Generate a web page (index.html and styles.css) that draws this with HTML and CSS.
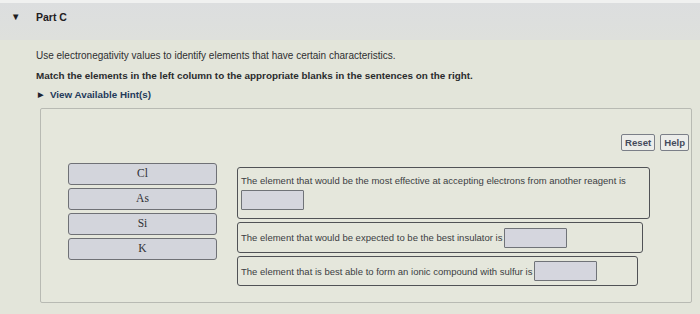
FILE: index.html
```html
<!DOCTYPE html>
<html>
<head>
<meta charset="utf-8">
<link rel="stylesheet" href="styles.css">
</head>
<body>
<div class="header">
  <span class="caret">&#9660;</span>
  <span class="part">Part C</span>
</div>
<div class="content">
  <p class="intro">Use electronegativity values to identify elements that have certain characteristics.</p>
  <p class="instr">Match the elements in the left column to the appropriate blanks in the sentences on the right.</p>
  <div class="hint"><span class="hint-caret">&#9654;</span><span class="hint-text">View Available Hint(s)</span></div>
  <div class="panel">
    <div class="toolbar">
      <span class="btn">Reset</span>
      <span class="btn">Help</span>
    </div>
    <div class="work">
      <div class="tiles">
        <div class="tile">Cl</div>
        <div class="tile">As</div>
        <div class="tile">Si</div>
        <div class="tile">K</div>
      </div>
      <div class="sentences">
        <div class="sent sent1">
          <span>The element that would be the most effective at accepting electrons from another reagent is</span>
          <span class="blank blank1"></span>
        </div>
        <div class="sent sent2">
          <span>The element that would be expected to be the best insulator is</span>
          <span class="blank"></span>
        </div>
        <div class="sent sent3">
          <span>The element that is best able to form an ionic compound with sulfur is</span>
          <span class="blank"></span>
        </div>
      </div>
    </div>
  </div>
</div>
</body>
</html>
```
FILE: styles.css
```css
html, body {
  margin: 0;
  padding: 0;
}
body {
  width: 700px;
  height: 314px;
  overflow: hidden;
  background: #e3e5da;
  font-family: "Liberation Sans", Arial, sans-serif;
  color: #2a2b2c;
}
.header {
  background: linear-gradient(#dcdedf, #dee0dc);
  border-top: 3px solid #f0f1f0;
  display: flex;
  align-items: center;
  padding-left: 11px;
  box-sizing: border-box;
  height: 40px;
  padding-bottom: 10px;
}
.caret {
  font-size: 9.5px;
  width: 25px;
  color: #1c1d1f;
}
.part {
  font-size: 10.5px;
  font-weight: bold;
  color: #1f2022;
}
.content {
  padding-left: 36px;
}
.intro {
  margin: 10px 0 0 0;
  font-size: 10px;
  line-height: 12px;
  color: #2e2f31;
}
.instr {
  margin: 8px 0 0 0;
  font-size: 9.9px;
  font-weight: bold;
  line-height: 12px;
  color: #2a2b2d;
}
.hint {
  margin-top: 7px;
  display: flex;
  align-items: center;
  padding-left: 2px;
  color: #243a5a;
  font-size: 9.8px;
  font-weight: bold;
}
.hint-caret {
  font-size: 7px;
  width: 12px;
  color: #1d2330;
}
.panel {
  margin-top: 8px;
  margin-left: 4px;
  width: 652px;
  height: 195px;
  border: 1px solid #b8bab3;
  border-radius: 2px;
  background: #e5e7dc;
  box-sizing: border-box;
}
.toolbar {
  display: flex;
  justify-content: flex-end;
  gap: 5px;
  padding: 25px 2px 0 0;
}
.btn {
  font-size: 9.6px;
  font-weight: bold;
  color: #454a5c;
  border: 1px solid #7b7f88;
  background: #ecedea;
  border-radius: 2px;
  padding: 1px 3px;
  line-height: 13px;
}
.work {
  display: flex;
  padding-left: 27px;
  margin-top: 12px;
  gap: 20px;
}
.tiles {
  display: flex;
  flex-direction: column;
  gap: 3px;
  padding-top: 0;
}
.tile {
  width: 149px;
  height: 22px;
  box-sizing: border-box;
  border: 1px solid #6f7176;
  border-radius: 3px;
  background: #d3d5dc;
  font-family: "Liberation Serif", "Times New Roman", serif;
  font-size: 11.5px;
  color: #2f3035;
  text-align: center;
  line-height: 18px;
}
.sentences {
  display: flex;
  flex-direction: column;
  gap: 3px;
  padding-top: 4px;
}
.sent {
  border: 1px solid #505256;
  border-radius: 3px;
  background: #e5e7dc;
  box-sizing: border-box;
  font-size: 9.5px;
  color: #3b3d42;
  display: flex;
  align-items: center;
  flex-wrap: wrap;
  padding: 0 3px;
}
.sent1 {
  width: 413px;
  height: 52px;
  align-content: flex-start;
  padding-top: 7px;
  row-gap: 4px;
}
.sent2 {
  width: 406px;
  height: 31px;
}
.sent3 {
  width: 401px;
  height: 30px;
}
.blank {
  display: inline-block;
  width: 63px;
  height: 20px;
  box-sizing: border-box;
  border: 1px solid #707378;
  border-radius: 1px;
  background: #d5d6de;
  margin-left: 2px;
}
.blank1 {
  margin-left: 0;
}
.sent1 span:first-child {
  width: 100%;
}
```
